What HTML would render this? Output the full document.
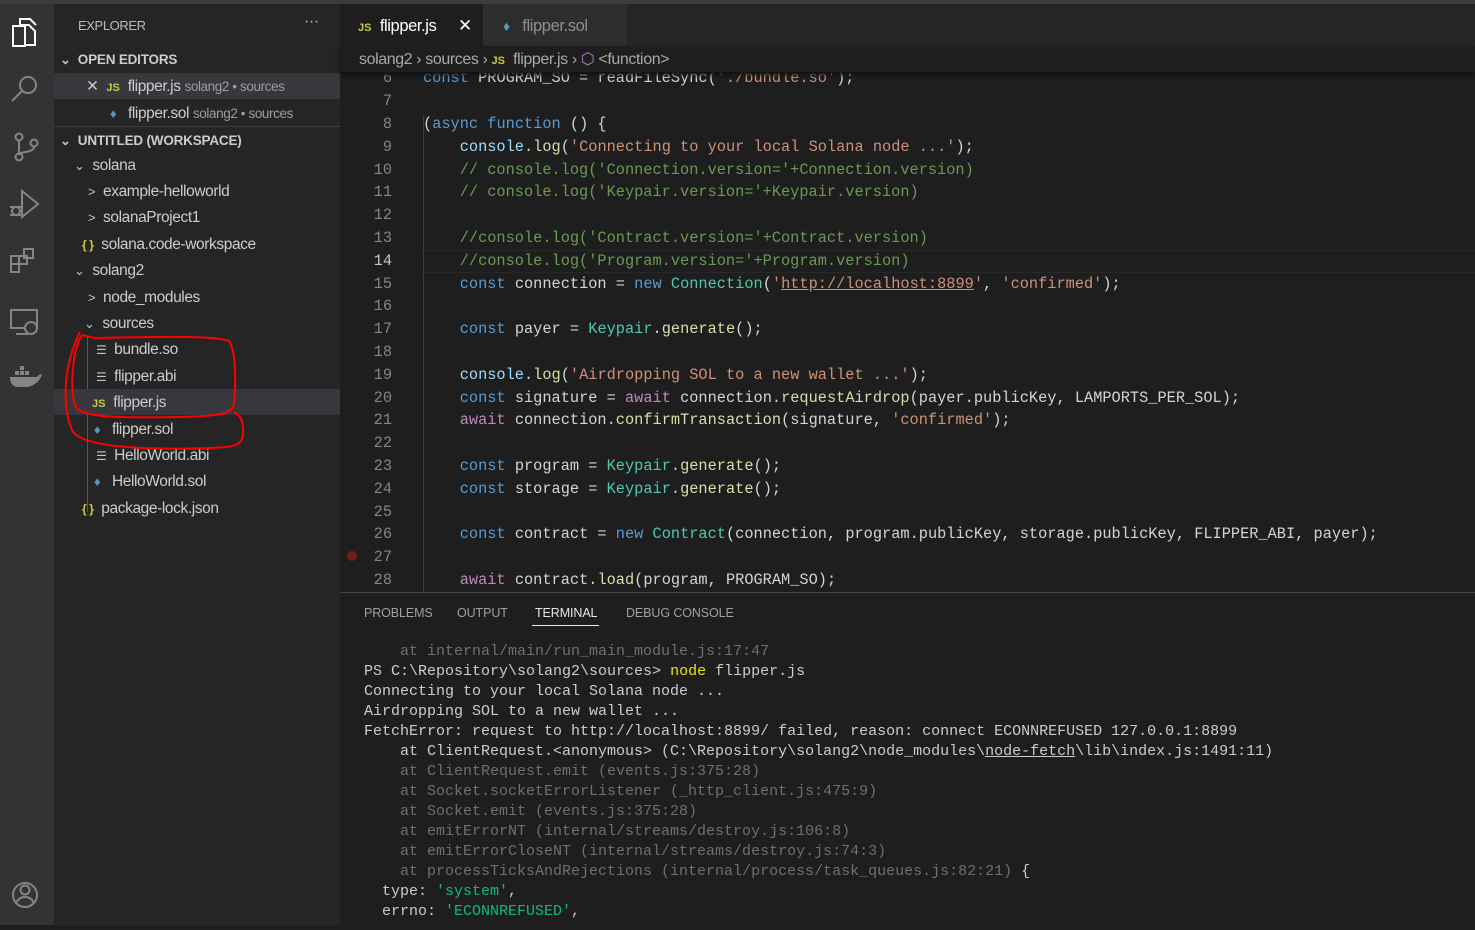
<!DOCTYPE html>
<html><head><meta charset="utf-8"><style>
*{margin:0;padding:0;box-sizing:border-box}
body{width:1475px;height:925px;overflow:hidden;background:#1e1e1e;position:relative;font-family:"Liberation Sans",sans-serif;}
.abs{position:absolute}
#top{left:0;top:0;width:1475px;height:4px;background:#3c3c3c}
#act{left:0;top:4px;width:54px;height:921px;background:#333333}
#side{left:54px;top:4px;width:286px;height:921px;background:#252526}
.row{position:absolute;left:0;width:286px;height:26px;line-height:27px;font-size:15.5px;color:#cccccc;white-space:nowrap;letter-spacing:-0.4px}
.row.sel{background:#37373d}
.hdr{font-weight:bold;font-size:13.5px;color:#cccccc;letter-spacing:-0.2px}
.dim{color:#9d9d9d;font-size:13.5px}
.js{color:#cbcb41;font-weight:bold;font-size:11px;letter-spacing:0}
.chev{display:inline-block;color:#c5c5c5;font-size:13px}
#tabs{left:340px;top:4px;width:1135px;height:42px;background:#252526}
.tab{position:absolute;top:0;height:42px;line-height:44px;font-size:16.5px;letter-spacing:-0.4px}
#bc{left:340px;top:46px;width:1135px;height:26px;background:#1e1e1e;font-size:16px;color:#a9a9a9;line-height:28px;letter-spacing:-0.4px;box-shadow:0 3px 4px #111;z-index:3}
#ed{left:340px;top:72px;width:1135px;height:520px;overflow:hidden;font-family:"Liberation Mono",monospace;font-size:15.3px;color:#d4d4d4}
.ln{position:absolute;left:0;width:52px;text-align:right;color:#858585;height:22.8px;line-height:22.8px}
.cl{position:absolute;left:83px;white-space:pre;height:22.8px;line-height:22.8px}
.k{color:#569cd6}.s{color:#ce9178}.c{color:#6a9955}.f{color:#dcdcaa}.v{color:#d4d4d4}.cv{color:#9cdcfe}.t{color:#4ec9b0}.p{color:#c586c0}
#panel{left:340px;top:592px;width:1135px;height:333px;border-top:1px solid #444;background:#1e1e1e}
.pt{position:absolute;top:13px;font-size:12.5px;color:#a0a0a0;letter-spacing:-0.1px}
#term{position:absolute;left:24px;top:49px;font-family:"Liberation Mono",monospace;font-size:15px;color:#cccccc;white-space:pre;line-height:20px}
.g{color:#6f6f6f}.y{color:#e5e510}.gr{color:#0dbc79}
</style></head><body>
<div id="top" class="abs"></div>
<div id="act" class="abs">
<svg width="54" height="921" viewBox="0 4 54 921" fill="none" stroke-width="2">
<g stroke="#ffffff"><path d="M20 25 h9 l6 6 v14 h-15z M20 25 v-6 h10 l6 6" /><rect x="13" y="26" width="12" height="20" fill="#333" /></g>
<g stroke="#858585">
<circle cx="28" cy="85" r="8"/><path d="M22 91 l-10 10"/>
<circle cx="19" cy="137" r="3.5"/><circle cx="19" cy="157" r="3.5"/><circle cx="34" cy="143" r="3.5"/><path d="M19 141 v12 M34 147 c0 6 -15 4 -15 8"/>
<path d="M22 191 l16 13 l-16 13 z"/><circle cx="16" cy="211" r="4"/><path d="M10 207 h12 M10 215 h12"/>
<rect x="11" y="256" width="8" height="8"/><rect x="19" y="256" width="8" height="8"/><rect x="11" y="264" width="8" height="8"/><rect x="24" y="249" width="9" height="9"/>
<rect x="11" y="310" width="26" height="18"/><path d="M16 334 h12"/><circle cx="31" cy="328" r="6" fill="#333"/>
<circle cx="25" cy="895" r="12"/><circle cx="25" cy="890" r="4.5"/><path d="M16 903 c4 -8 14 -8 18 0"/>
</g>
<path d="M10 377 h27 c2 -3 4 -3 5 -2 c-2 3 -3 9 -14 12 h-10 c-6 0 -8 -5 -8 -10z" fill="#858585"/>
<g fill="#858585"><rect x="15" y="371" width="4" height="4"/><rect x="20" y="371" width="4" height="4"/><rect x="25" y="371" width="4" height="4"/><rect x="20" y="366" width="4" height="4"/></g>
</svg>
</div>
<div id="side" class="abs">
<div class="row" style="top:8px;height:26px;color:#bbbbbb;font-size:13px;padding-left:24px">EXPLORER<span style="position:absolute;left:250px;top:-4px;font-size:16px">···</span></div>
<div class="row hdr" style="top:42px;padding-left:6px"><span class="chev">&#8964;</span>&nbsp; OPEN EDITORS</div>
<div class="row sel" style="top:69px;padding-left:32px"><span style="color:#cccccc">✕</span>&nbsp;&nbsp;<span class="js">JS</span>&nbsp; flipper.js <span class="dim">solang2 • sources</span></div>
<div class="row" style="top:96px;padding-left:56px"><span style="color:#519aba;font-size:13px">♦</span>&nbsp;&nbsp; flipper.sol <span class="dim">solang2 • sources</span></div>
<div class="row hdr" style="top:122px;padding-left:6px;border-top:1px solid #3c3c3c"><span class="chev">&#8964;</span>&nbsp; UNTITLED (WORKSPACE)</div>
<div class="row" style="top:148px;padding-left:20px"><span class="chev">&#8964;</span>&nbsp; solana</div>
<div class="row" style="top:174px;padding-left:34px"><span class="chev">&gt;</span>&nbsp; example-helloworld</div>
<div class="row" style="top:200px;padding-left:34px"><span class="chev">&gt;</span>&nbsp; solanaProject1</div>
<div class="row" style="top:227px;padding-left:28px"><span style="color:#cbcb41;font-size:12px;font-weight:bold">{ }</span>&nbsp; solana.code-workspace</div>
<div class="row" style="top:253px;padding-left:20px"><span class="chev">&#8964;</span>&nbsp; solang2</div>
<div class="row" style="top:280px;padding-left:34px"><span class="chev">&gt;</span>&nbsp; node_modules</div>
<div class="row" style="top:306px;padding-left:30px"><span class="chev">&#8964;</span>&nbsp; sources</div>
<div style="position:absolute;left:33px;top:332px;width:1px;height:176px;background:#585858"></div>
<div class="row" style="top:332px;padding-left:42px"><span style="color:#c5c5c5;font-size:12px">☰</span>&nbsp; bundle.so</div>
<div class="row" style="top:359px;padding-left:42px"><span style="color:#c5c5c5;font-size:12px">☰</span>&nbsp; flipper.abi</div>
<div class="row sel" style="top:385px;padding-left:38px"><span class="js">JS</span>&nbsp; flipper.js</div>
<div class="row" style="top:412px;padding-left:40px"><span style="color:#519aba;font-size:13px">♦</span>&nbsp;&nbsp; flipper.sol</div>
<div class="row" style="top:438px;padding-left:42px"><span style="color:#c5c5c5;font-size:12px">☰</span>&nbsp; HelloWorld.abi</div>
<div class="row" style="top:464px;padding-left:40px"><span style="color:#519aba;font-size:13px">♦</span>&nbsp;&nbsp; HelloWorld.sol</div>
<div class="row" style="top:491px;padding-left:28px"><span style="color:#cbcb41;font-size:12px;font-weight:bold">{ }</span>&nbsp; package-lock.json</div>
</div>
<svg class="abs" style="left:0;top:0;z-index:5" width="340" height="460" fill="none" stroke="#ff0000" stroke-width="2">
<path d="M82 335 C72 350 70 390 75 405 C78 418 120 418 180 417 C215 416 233 415 234 404 C236 385 236 350 229 341 C215 335 150 337 95 338 L82 335"/>
<path d="M80 332 C66 360 60 400 72 430 C80 448 150 450 210 448 C235 447 244 446 243 430 C243 420 240 415 234 412"/>
</svg>
<div id="tabs" class="abs">
<div class="tab" style="left:0;width:143px;background:#1e1e1e;color:#ffffff;padding-left:18px"><span class="js">JS</span>&nbsp; flipper.js<span style="position:absolute;left:118px;font-size:17px">✕</span></div>
<div class="tab" style="left:143px;width:144px;background:#2d2d2d;color:#8f8f8f;padding-left:20px"><span style="color:#519aba;font-size:14px">♦</span>&nbsp;&nbsp; flipper.sol</div>
</div>
<div id="bc" class="abs"><span style="padding-left:19px">solang2 › sources › <span class="js">JS</span>&nbsp; flipper.js › <span style="color:#b180d7">⬡</span> &lt;function&gt;</span></div>
<div id="ed" class="abs">
<div style="position:absolute;left:83px;top:44px;width:1px;height:480px;background:#404040"></div>
<div style="position:absolute;left:83px;top:178px;width:1052px;height:23px;border-top:1px solid #282828;border-bottom:1px solid #282828"></div>
<div style="position:absolute;left:7px;top:479px;width:10px;height:10px;border-radius:5px;background:#7a1a1a"></div>
<div id="lines"></div>
</div>
<div id="panel" class="abs">
<span class="pt" style="left:24px">PROBLEMS</span>
<span class="pt" style="left:117px">OUTPUT</span>
<span class="pt" style="left:195px;color:#e7e7e7">TERMINAL</span>
<div style="position:absolute;left:192px;top:32px;width:67px;height:1px;background:#e7e7e7"></div>
<span class="pt" style="left:286px">DEBUG CONSOLE</span>
<div id="term"><span class="g">    at internal/main/run_main_module.js:17:47</span>
PS C:\Repository\solang2\sources&gt; <span class="y">node</span> flipper.js
Connecting to your local Solana node ...
Airdropping SOL to a new wallet ...
FetchError: request to http://localhost:8899/ failed, reason: connect ECONNREFUSED 127.0.0.1:8899
    at ClientRequest.&lt;anonymous&gt; (C:\Repository\solang2\node_modules\<u>node-fetch</u>\lib\index.js:1491:11)
<span class="g">    at ClientRequest.emit (events.js:375:28)
    at Socket.socketErrorListener (_http_client.js:475:9)
    at Socket.emit (events.js:375:28)
    at emitErrorNT (internal/streams/destroy.js:106:8)
    at emitErrorCloseNT (internal/streams/destroy.js:74:3)
    at processTicksAndRejections (internal/process/task_queues.js:82:21)</span> {
  type: <span class="gr">'system'</span>,
  errno: <span class="gr">'ECONNREFUSED'</span>,</div>
</div>
<script>
var L=[
[6,'<span class="k">const</span> PROGRAM_SO = readFileSync(<span class="s">\'./bundle.so\'</span>);'],
[7,''],
[8,'(<span class="k">async</span> <span class="k">function</span> () {'],
[9,'    <span class="cv">console</span>.<span class="f">log</span>(<span class="s">\'Connecting to your local Solana node ...\'</span>);'],
[10,'    <span class="c">// console.log(\'Connection.version=\'+Connection.version)</span>'],
[11,'    <span class="c">// console.log(\'Keypair.version=\'+Keypair.version)</span>'],
[12,''],
[13,'    <span class="c">//console.log(\'Contract.version=\'+Contract.version)</span>'],
[14,'    <span class="c">//console.log(\'Program.version=\'+Program.version)</span>'],
[15,'    <span class="k">const</span> <span class="v">connection</span> = <span class="k">new</span> <span class="t">Connection</span>(<span class="s">\'<u>http://localhost:8899</u>\'</span>, <span class="s">\'confirmed\'</span>);'],
[16,''],
[17,'    <span class="k">const</span> <span class="v">payer</span> = <span class="t">Keypair</span>.<span class="f">generate</span>();'],
[18,''],
[19,'    <span class="cv">console</span>.<span class="f">log</span>(<span class="s">\'Airdropping SOL to a new wallet ...\'</span>);'],
[20,'    <span class="k">const</span> <span class="v">signature</span> = <span class="p">await</span> <span class="v">connection</span>.<span class="f">requestAirdrop</span>(<span class="v">payer</span>.<span class="v">publicKey</span>, <span class="v">LAMPORTS_PER_SOL</span>);'],
[21,'    <span class="p">await</span> <span class="v">connection</span>.<span class="f">confirmTransaction</span>(<span class="v">signature</span>, <span class="s">\'confirmed\'</span>);'],
[22,''],
[23,'    <span class="k">const</span> <span class="v">program</span> = <span class="t">Keypair</span>.<span class="f">generate</span>();'],
[24,'    <span class="k">const</span> <span class="v">storage</span> = <span class="t">Keypair</span>.<span class="f">generate</span>();'],
[25,''],
[26,'    <span class="k">const</span> <span class="v">contract</span> = <span class="k">new</span> <span class="t">Contract</span>(<span class="v">connection</span>, <span class="v">program</span>.<span class="v">publicKey</span>, <span class="v">storage</span>.<span class="v">publicKey</span>, <span class="v">FLIPPER_ABI</span>, <span class="v">payer</span>);'],
[27,''],
[28,'    <span class="p">await</span> <span class="v">contract</span>.<span class="f">load</span>(<span class="v">program</span>, <span class="v">PROGRAM_SO</span>);']];
var h='';L.forEach(function(r,i){var y=(-4.6+i*22.8).toFixed(1);h+='<div class="ln" style="top:'+y+'px;'+(r[0]==14?'color:#c6c6c6':'')+'">'+r[0]+'</div><div class="cl" style="top:'+y+'px">'+r[1]+'</div>';});
document.getElementById('lines').innerHTML=h;
</script>
</body></html>
